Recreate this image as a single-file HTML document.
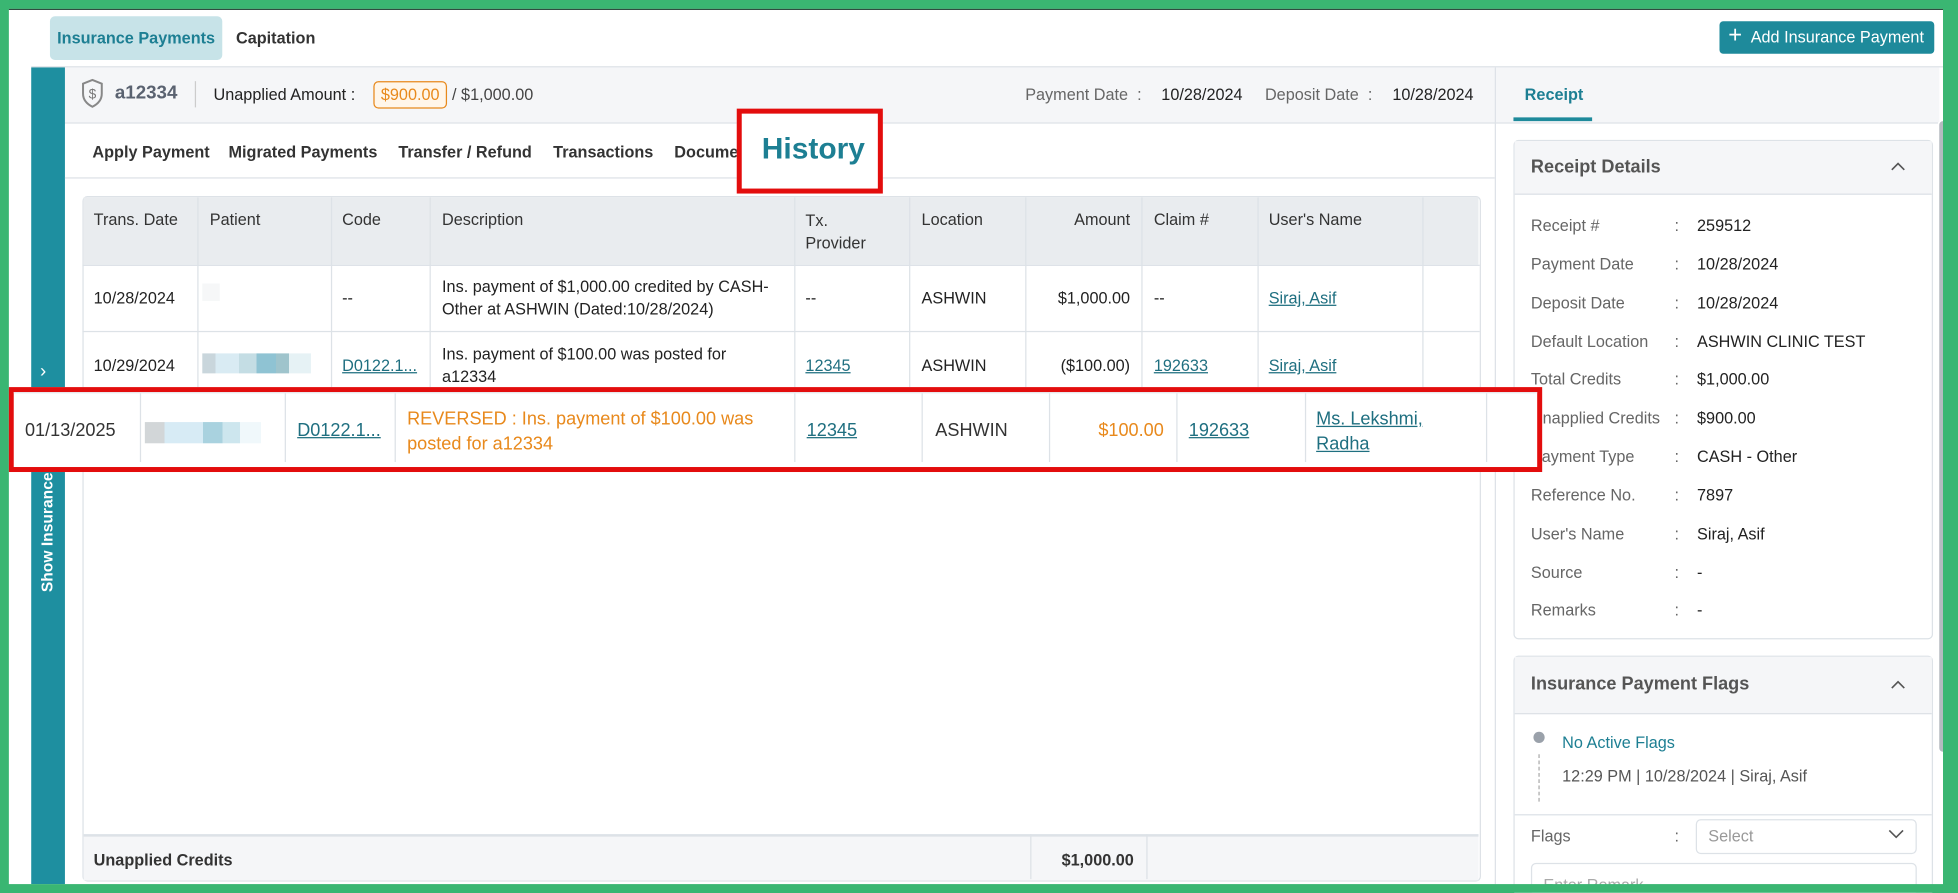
<!DOCTYPE html>
<html><head><meta charset="utf-8"><style>
html,body{margin:0;padding:0;width:1958px;height:893px;overflow:hidden;background:#3ab672;}
#s{position:absolute;left:0;top:0;width:1568px;height:715px;overflow:hidden;transform:scale(1.24872);transform-origin:0 0;font-family:"Liberation Sans",Arial,sans-serif;color:#222;font-size:13px;}
.a{position:absolute;white-space:nowrap;}
.b{font-weight:bold;}
.lk{color:#1f6f80;text-decoration:underline;}
.vl{position:absolute;width:1px;background:#dde2e7;}
.hl{position:absolute;height:1px;background:#dde2e7;}
.rl{position:absolute;left:1226px;color:#666;}
.rc{position:absolute;left:1341px;color:#666;}
.rv{position:absolute;left:1359px;color:#222;white-space:nowrap;}
.o{color:#e8891c;}
.big{font-size:14.5px;}
</style></head><body><div id="s">
<div class="a" style="left:7px;top:7px;width:1549px;height:701px;background:#fff;border-top:1px solid #2e4a3e;"></div>
<!-- top bar -->
<div class="a b" style="left:40px;top:13px;width:138px;height:35px;background:#c7e3e8;border-radius:4px;color:#1d7f93;line-height:35px;text-align:center;">Insurance Payments</div>
<div class="a b" style="left:189px;top:13px;line-height:35px;color:#333;">Capitation</div>
<div class="a" style="left:1377px;top:17px;width:172px;height:26px;background:#1e8a9b;border-radius:3px;color:#fff;line-height:26px;font-size:13px;"><span style="font-size:19px;position:absolute;left:7px;top:-1px;">+</span><span style="position:absolute;left:25px;">Add Insurance Payment</span></div>
<div class="hl" style="left:25px;top:53px;width:1531px;"></div>
<!-- header row -->
<div class="a" style="left:52px;top:54px;width:1145px;height:44px;background:#f5f6f8;"></div>
<div class="a" style="left:1197px;top:54px;width:356px;height:44px;background:#f5f6f8;"></div>
<div class="hl" style="left:52px;top:98px;width:1500px;"></div>
<div class="vl" style="left:1197px;top:54px;height:654px;"></div>
<svg class="a" style="left:65px;top:63px" width="18" height="24" viewBox="0 0 18 24"><path d="M9 1 L16.5 4 V12 C16.5 17 13 20.5 9 22.5 C5 20.5 1.5 17 1.5 12 V4 Z" fill="none" stroke="#888" stroke-width="1.6"/><text x="9" y="16" font-size="11" text-anchor="middle" fill="#777" font-family="Liberation Sans">$</text></svg>
<div class="a b" style="left:92px;top:66px;font-size:15px;color:#5a6270;">a12334</div>
<div class="vl" style="left:156px;top:65px;height:21px;background:#ccc;"></div>
<div class="a" style="left:171px;top:68px;">Unapplied Amount :</div>
<div class="a" style="left:299px;top:65px;width:57px;height:20px;border:1px solid #e8891c;border-radius:4px;background:#fff6ea;color:#e8891c;text-align:center;line-height:20px;">$900.00</div>
<div class="a" style="left:362px;top:68px;color:#444;">/ $1,000.00</div>
<div class="a" style="left:821px;top:68px;color:#666;">Payment Date&nbsp;&nbsp;:</div>
<div class="a" style="left:930px;top:68px;">10/28/2024</div>
<div class="a" style="left:1013px;top:68px;color:#666;">Deposit Date&nbsp;&nbsp;:</div>
<div class="a" style="left:1115px;top:68px;">10/28/2024</div>
<div class="a b" style="left:1221px;top:68px;color:#1d7f93;">Receipt</div>
<div class="a" style="left:1212px;top:94px;width:63px;height:3px;background:#1e8a9b;"></div>
<!-- sidebar -->
<div class="a" style="left:25px;top:54px;width:27px;height:654px;background:#1e8fa0;"></div>
<div class="a" style="left:32px;top:289px;color:#fff;font-size:15px;">&#8250;</div>
<div class="a b" style="left:38px;top:395px;color:#fff;font-size:12.5px;transform:translate(-50%,-50%) rotate(-90deg);">Show Insurance Payments</div>
<!-- sub tabs -->
<div class="a b" style="left:74px;top:114px;color:#333;">Apply Payment</div>
<div class="a b" style="left:183px;top:114px;color:#333;">Migrated Payments</div>
<div class="a b" style="left:319px;top:114px;color:#333;">Transfer / Refund</div>
<div class="a b" style="left:443px;top:114px;color:#333;">Transactions</div>
<div class="a b" style="left:540px;top:114px;color:#333;">Documents</div>
<div class="hl" style="left:52px;top:142px;width:1145px;"></div>
<div class="a" style="left:590px;top:87px;width:109px;height:60px;border:4px solid #e30d0d;background:#fff;"></div>
<div class="a b" style="left:610px;top:106px;font-size:24px;color:#1d7f93;">History</div>
<!-- table -->
<div class="a" style="left:66px;top:157px;width:1118px;height:547px;border:1px solid #dde2e7;border-radius:4px;background:#fff;"></div>
<div class="a" style="left:67px;top:158px;width:1117px;height:54px;background:#e9ecef;"></div>
<div class="hl" style="left:66px;top:212px;width:1119px;"></div>
<div class="hl" style="left:66px;top:265px;width:1119px;"></div>
<div class="vl" style="left:158px;top:158px;height:152px;"></div>
<div class="vl" style="left:265px;top:158px;height:152px;"></div>
<div class="vl" style="left:344px;top:158px;height:152px;"></div>
<div class="vl" style="left:636px;top:158px;height:152px;"></div>
<div class="vl" style="left:728px;top:158px;height:152px;"></div>
<div class="vl" style="left:821px;top:158px;height:152px;"></div>
<div class="vl" style="left:914px;top:158px;height:152px;"></div>
<div class="vl" style="left:1007px;top:158px;height:152px;"></div>
<div class="vl" style="left:1139px;top:158px;height:152px;"></div>
<div class="a" style="left:75px;top:168px;color:#333;">Trans. Date</div>
<div class="a" style="left:168px;top:168px;color:#333;">Patient</div>
<div class="a" style="left:274px;top:168px;color:#333;">Code</div>
<div class="a" style="left:354px;top:168px;color:#333;">Description</div>
<div class="a" style="left:645px;top:168px;color:#333;line-height:18px;">Tx.<br>Provider</div>
<div class="a" style="left:738px;top:168px;color:#333;">Location</div>
<div class="a" style="left:821px;top:168px;width:84px;text-align:right;color:#333;">Amount</div>
<div class="a" style="left:924px;top:168px;color:#333;">Claim #</div>
<div class="a" style="left:1016px;top:168px;color:#333;">User's Name</div>
<!-- row1 -->
<div class="a" style="left:75px;top:231px;">10/28/2024</div>
<div class="a" style="left:162px;top:227px;width:14px;height:14px;background:#f6f7f8;"></div>
<div class="a" style="left:274px;top:231px;">--</div>
<div class="a" style="left:354px;top:221px;line-height:18px;">Ins. payment of $1,000.00 credited by CASH-<br>Other at ASHWIN (Dated:10/28/2024)</div>
<div class="a" style="left:645px;top:231px;">--</div>
<div class="a" style="left:738px;top:231px;">ASHWIN</div>
<div class="a" style="left:821px;top:231px;width:84px;text-align:right;">$1,000.00</div>
<div class="a" style="left:924px;top:231px;">--</div>
<div class="a lk" style="left:1016px;top:231px;">Siraj, Asif</div>
<!-- row2 -->
<div class="a" style="left:75px;top:285px;">10/29/2024</div>
<div class="a" style="left:162px;top:283px;width:87px;height:16px;background:linear-gradient(90deg,#c9d6dc 0 12%,#d9ebf3 12% 34%,#c4dde4 34% 50%,#8fc3d3 50% 68%,#9fc4cc 68% 80%,#e6f2f5 80% 100%);"></div>
<div class="a lk" style="left:274px;top:285px;">D0122.1...</div>
<div class="a" style="left:354px;top:275px;line-height:18px;">Ins. payment of $100.00 was posted for<br>a12334</div>
<div class="a lk" style="left:645px;top:285px;">12345</div>
<div class="a" style="left:738px;top:285px;">ASHWIN</div>
<div class="a" style="left:821px;top:285px;width:84px;text-align:right;">($100.00)</div>
<div class="a lk" style="left:924px;top:285px;">192633</div>
<div class="a lk" style="left:1016px;top:285px;">Siraj, Asif</div>
<!-- footer -->
<div class="a" style="left:67px;top:668px;width:1117px;height:35px;background:#f5f6f8;border-top:2px solid #dde2e7;"></div>
<div class="vl" style="left:825px;top:668px;height:36px;"></div>
<div class="vl" style="left:918px;top:668px;height:36px;"></div>
<div class="a b" style="left:75px;top:681px;color:#333;">Unapplied Credits</div>
<div class="a b" style="left:826px;top:681px;width:82px;text-align:right;color:#333;">$1,000.00</div>
<!-- right: receipt details -->
<div class="a" style="left:1212px;top:112px;width:334px;height:398px;border:1px solid #dde2e7;border-radius:4px;background:#fff;"></div>
<div class="a" style="left:1213px;top:113px;width:334px;height:42px;background:#f5f6f8;border-bottom:1px solid #dde2e7;"></div>
<div class="a b" style="left:1226px;top:126px;font-size:14.5px;color:#555;">Receipt Details</div>
<svg class="a" style="left:1514px;top:129px" width="12" height="8" viewBox="0 0 12 8"><path d="M1 7 L6 2 L11 7" fill="none" stroke="#555" stroke-width="1.3"/></svg>
<div class="rl" style="top:173px;">Receipt #</div><div class="rc" style="top:173px;">:</div><div class="rv" style="top:173px;">259512</div>
<div class="rl" style="top:204px;">Payment Date</div><div class="rc" style="top:204px;">:</div><div class="rv" style="top:204px;">10/28/2024</div>
<div class="rl" style="top:235px;">Deposit Date</div><div class="rc" style="top:235px;">:</div><div class="rv" style="top:235px;">10/28/2024</div>
<div class="rl" style="top:266px;">Default Location</div><div class="rc" style="top:266px;">:</div><div class="rv" style="top:266px;">ASHWIN CLINIC TEST</div>
<div class="rl" style="top:296px;">Total Credits</div><div class="rc" style="top:296px;">:</div><div class="rv" style="top:296px;">$1,000.00</div>
<div class="rl" style="top:327px;">Unapplied Credits</div><div class="rc" style="top:327px;">:</div><div class="rv" style="top:327px;">$900.00</div>
<div class="rl" style="top:358px;">Payment Type</div><div class="rc" style="top:358px;">:</div><div class="rv" style="top:358px;">CASH - Other</div>
<div class="rl" style="top:389px;">Reference No.</div><div class="rc" style="top:389px;">:</div><div class="rv" style="top:389px;">7897</div>
<div class="rl" style="top:420px;">User's Name</div><div class="rc" style="top:420px;">:</div><div class="rv" style="top:420px;">Siraj, Asif</div>
<div class="rl" style="top:451px;">Source</div><div class="rc" style="top:451px;">:</div><div class="rv" style="top:451px;">-</div>
<div class="rl" style="top:481px;">Remarks</div><div class="rc" style="top:481px;">:</div><div class="rv" style="top:481px;">-</div>
<!-- overlay highlighted row -->
<div class="a" style="left:7px;top:310px;width:1220px;height:60px;border:4px solid #e30d0d;background:#fff;"></div>
<div class="hl" style="left:11px;top:314px;width:1220px;background:#e6e9ed;"></div>
<div class="vl" style="left:112px;top:315px;height:55px;"></div>
<div class="vl" style="left:228px;top:315px;height:55px;"></div>
<div class="vl" style="left:316px;top:315px;height:55px;"></div>
<div class="vl" style="left:636px;top:315px;height:55px;"></div>
<div class="vl" style="left:738px;top:315px;height:55px;"></div>
<div class="vl" style="left:840px;top:315px;height:55px;"></div>
<div class="vl" style="left:942px;top:315px;height:55px;"></div>
<div class="vl" style="left:1045px;top:315px;height:55px;"></div>
<div class="vl" style="left:1190px;top:315px;height:55px;"></div>
<div class="a big" style="left:20px;top:337px;color:#333;">01/13/2025</div>
<div class="a" style="left:116px;top:338px;width:93px;height:17px;background:linear-gradient(90deg,#d2d6d8 0 17%,#d7ebf5 17% 50%,#a9d2df 50% 67%,#cde6ee 67% 82%,#f0f8fb 82% 100%);"></div>
<div class="a lk big" style="left:238px;top:337px;">D0122.1...</div>
<div class="a o big" style="left:326px;top:326px;line-height:20px;">REVERSED : Ins. payment of $100.00 was<br>posted for a12334</div>
<div class="a lk big" style="left:646px;top:337px;">12345</div>
<div class="a big" style="left:749px;top:337px;color:#333;">ASHWIN</div>
<div class="a o big" style="left:840px;top:337px;width:92px;text-align:right;">$100.00</div>
<div class="a lk big" style="left:952px;top:337px;">192633</div>
<div class="a lk big" style="left:1054px;top:326px;line-height:20px;">Ms. Lekshmi,<br>Radha</div>
<!-- flags card -->
<div class="a" style="left:1212px;top:525px;width:334px;height:190px;border:1px solid #dde2e7;border-radius:4px;background:#fff;"></div>
<div class="a" style="left:1213px;top:526px;width:334px;height:45px;background:#f5f6f8;border-bottom:1px solid #dde2e7;"></div>
<div class="a b" style="left:1226px;top:540px;font-size:14.5px;color:#555;">Insurance Payment Flags</div>
<svg class="a" style="left:1514px;top:544px" width="12" height="8" viewBox="0 0 12 8"><path d="M1 7 L6 2 L11 7" fill="none" stroke="#555" stroke-width="1.3"/></svg>
<div class="a" style="left:1228px;top:586px;width:9px;height:9px;border-radius:50%;background:#9aa1aa;"></div>
<div class="a" style="left:1232px;top:604px;height:38px;border-left:1px dashed #aaa;"></div>
<div class="a" style="left:1251px;top:587px;color:#1d7f93;">No Active Flags</div>
<div class="a" style="left:1251px;top:614px;color:#555;">12:29 PM | 10/28/2024 | Siraj, Asif</div>
<div class="hl" style="left:1213px;top:652px;width:334px;"></div>
<div class="rl" style="top:662px;">Flags</div><div class="rc" style="top:662px;">:</div>
<div class="a" style="left:1358px;top:656px;width:175px;height:26px;border:1px solid #dde2e7;border-radius:4px;background:#fff;"></div>
<div class="a" style="left:1368px;top:662px;color:#999;">Select</div>
<svg class="a" style="left:1512px;top:664px" width="13" height="8" viewBox="0 0 13 8"><path d="M1 1 L6.5 6.5 L12 1" fill="none" stroke="#555" stroke-width="1.3"/></svg>
<div class="a" style="left:1226px;top:691px;width:307px;height:30px;border:1px solid #dde2e7;border-radius:4px;background:#fff;"></div>
<div class="a" style="left:1236px;top:701px;color:#aaa;">Enter Remark</div>
<!-- scrollbar -->
<div class="a" style="left:1553px;top:97px;width:7px;height:505px;background:#b5bac0;border-radius:3px;"></div>
<!-- green frame -->
<div class="a" style="left:0;top:708px;width:1568px;height:7px;background:#3ab672;"></div>
<div class="a" style="left:1556px;top:0;width:12px;height:715px;background:#3ab672;"></div>
<div class="a" style="left:0;top:0;width:1568px;height:7px;background:#3ab672;"></div>
<div class="a" style="left:0;top:0;width:7px;height:715px;background:#3ab672;"></div>
</div>
</body></html>
